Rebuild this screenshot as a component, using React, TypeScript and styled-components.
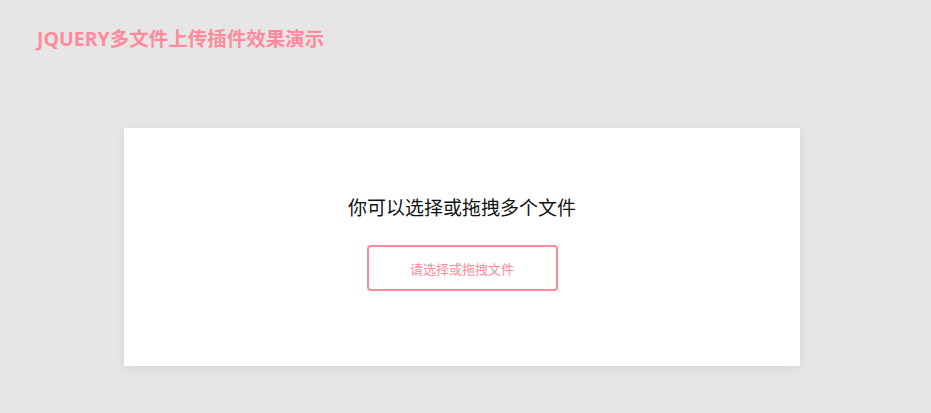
import styled, { createGlobalStyle } from 'styled-components';

const GlobalStyle = createGlobalStyle`
	html, body {
		margin: 0;
		padding: 0;
		background: #e6e6e6;
		font-family: "Open Sans", "Noto Sans CJK SC", sans-serif;
	}
`;

const Page = styled.div`
	min-height: 413px;
	padding: 27px 0 0;
	box-sizing: border-box;
`;

const Title = styled.h1`
	margin: 0 0 0 37px;
	font-size: 19.5px;
	line-height: 24px;
	font-weight: 700;
	color: #ff8a9b;
`;

const Card = styled.div`
	width: 676px;
	height: 238px;
	margin: 77px 0 0 124px;
	background: #fff;
	box-shadow: 0 2px 10px rgba(0, 0, 0, 0.08);
	box-sizing: border-box;
	padding-top: 67px;
	display: flex;
	flex-direction: column;
	align-items: center;
`;

const Heading = styled.div`
	font-size: 19px;
	line-height: 26px;
	color: #111;
`;

const PickButton = styled.button`
	margin-top: 24px;
	width: 191px;
	height: 46px;
	border: 2px solid #ff8a9b;
	border-radius: 4px;
	background: #fff;
	color: #ff8a9b;
	font-family: "Open Sans", "Noto Sans CJK SC", sans-serif;
	font-size: 13px;
	cursor: pointer;
`;

export default function App() {
	return (
		<Page>
			<GlobalStyle />
			<Title>JQUERY多文件上传插件效果演示</Title>
			<Card>
				<Heading>你可以选择或拖拽多个文件</Heading>
				<PickButton>请选择或拖拽文件</PickButton>
			</Card>
		</Page>
	);
}
